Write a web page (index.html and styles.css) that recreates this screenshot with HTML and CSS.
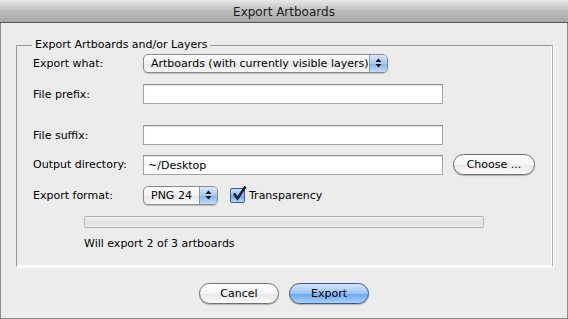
FILE: index.html
```html
<!DOCTYPE html>
<html lang="en">
<head>
  <meta charset="UTF-8" />
  <title>Export Artboards</title>
  <link rel="stylesheet" href="styles.css">
</head>
<body>
  <div class="window">
    <div class="titlebar">Export Artboards</div>
    <div class="content">
      <fieldset class="group">
        <legend>Export Artboards and/or Layers</legend>
        <div class="row row-what">
          <span class="label">Export what:</span>
          <div class="popup popup-wide">
            <span class="popup-text">Artboards (with currently visible layers)</span>
            <span class="popup-arrows">
              <svg width="7" height="10" viewBox="0 0 7 10"><path d="M3.5 0.5 L6.5 4 L0.5 4 Z M0.5 6 L6.5 6 L3.5 9.5 Z" fill="#111"/></svg>
            </span>
          </div>
        </div>
        <div class="row row-prefix">
          <span class="label">File prefix:</span>
          <div class="field"></div>
        </div>
        <div class="row row-suffix">
          <span class="label">File suffix:</span>
          <div class="field"></div>
        </div>
        <div class="row row-dir">
          <span class="label">Output directory:</span>
          <div class="field">~/Desktop</div>
          <button class="btn btn-choose" type="button">Choose ...</button>
        </div>
        <div class="row row-format">
          <span class="label">Export format:</span>
          <div class="popup popup-small">
            <span class="popup-text">PNG 24</span>
            <span class="popup-arrows">
              <svg width="7" height="10" viewBox="0 0 7 10"><path d="M3.5 0.5 L6.5 4 L0.5 4 Z M0.5 6 L6.5 6 L3.5 9.5 Z" fill="#111"/></svg>
            </span>
          </div>
          <label class="check">
            <span class="box">
              <svg width="16" height="16" viewBox="0 0 16 16"><path d="M3 7.5 L6.5 12.5 L14.5 0.5" fill="none" stroke="#0d1f3a" stroke-width="2.6"/></svg>
            </span>
            Transparency
          </label>
        </div>
        <div class="progress"></div>
        <div class="status">Will export 2 of 3 artboards</div>
      </fieldset>
      <div class="actions">
        <button class="btn" type="button">Cancel</button>
        <button class="btn btn-default" type="button">Export</button>
      </div>
    </div>
  </div>
</body>
</html>
```

FILE: styles.css
```css
body {
  margin: 0;
  font-family: "DejaVu Sans", sans-serif;
  font-size: 11px;
  color: #000;
  background: #ececec;
}
.window {
  width: 568px;
  height: 319px;
  box-sizing: border-box;
  border: 1px solid #8a8a8a;
  border-top: none;
  background: #ececec;
  display: flex;
  flex-direction: column;
}
.titlebar {
  height: 22px;
  line-height: 25px;
  text-align: center;
  font-size: 12px;
  color: #1a1a1a;
  background: linear-gradient(#e9e9e9, #bcbcbc 50%, #a7a7a7);
  border-bottom: 1px solid #555;
  margin: 0 -1px;
}
.content {
  flex: 1;
  padding: 15px 14px 0 15px;
  display: flex;
  flex-direction: column;
}
.group {
  margin: 0;
  padding: 0 0 0 16px;
  height: 229px;
  box-sizing: border-box;
  border: 1px solid #9a9a9a;
  border-right-color: #b0b0b0;
  border-bottom-color: #fafafa;
  box-shadow: inset -1px -1px 0 #fff, 1px 1px 0 #fff;
  display: flex;
  flex-direction: column;
}
.group legend {
  padding: 0 3px;
  margin-left: -1px;
  line-height: 14px;
}
.row {
  display: flex;
  align-items: center;
}
.label {
  width: 110px;
  flex: none;
}
.row-what { margin-top: 1px; height: 20px; }
.row-prefix { margin-top: 11px; height: 20px; }
.row-suffix { margin-top: 21px; height: 20px; }
.row-dir { margin-top: 9px; height: 21px; }
.row-format { margin-top: 10px; height: 20px; }
.field {
  width: 300px;
  height: 20px;
  box-sizing: border-box;
  background: #fff;
  border: 1px solid #a4a4a4;
  border-top-color: #8e8e8e;
  box-shadow: inset 0 1px 1px rgba(0,0,0,0.12);
  padding: 2px 4px;
  line-height: 15px;
}
.popup {
  height: 19px;
  box-sizing: border-box;
  border: 1px solid #8a8a8a;
  border-radius: 5px;
  background: linear-gradient(#ffffff, #f2f2f2 50%, #e6e6e6 51%, #f8f8f8);
  display: flex;
  align-items: center;
  box-shadow: 0 1px 1px rgba(0,0,0,0.2);
  overflow: hidden;
}
.popup-wide { width: 245px; }
.popup-small { width: 75px; }
.popup-text {
  flex: 1;
  padding-left: 7px;
  white-space: nowrap;
}
.popup-arrows {
  width: 17px;
  height: 100%;
  display: flex;
  align-items: center;
  justify-content: center;
  border-left: 1px solid #7d97c4;
  background: linear-gradient(#d9e7fb, #a9c8f2 50%, #86b2ec 51%, #c3dcfa);
}
.check {
  display: flex;
  align-items: center;
  margin-left: 12px;
}
.box {
  position: relative;
  width: 13px;
  height: 13px;
  border: 1px solid #3c5d8e;
  border-radius: 2px;
  background: linear-gradient(#cde0fa, #8ab6ee 50%, #6a9fe5 51%, #b6d5f9);
  margin-right: 4px;
}
.box svg {
  position: absolute;
  left: 0;
  top: -3px;
}
.btn {
  font-family: inherit;
  font-size: 11px;
  height: 21px;
  width: 80px;
  padding: 0;
  border: 1px solid #6f6f6f;
  border-radius: 11px;
  background: linear-gradient(#ffffff, #f4f4f4 50%, #e7e7e7 51%, #fafafa);
  box-shadow: 0 1px 1px rgba(0,0,0,0.25);
  color: #000;
}
.btn-choose {
  width: 82px;
  margin-left: 10px;
}
.btn-default {
  border-color: #3a5a8c;
  background: linear-gradient(#d4e6fc, #9cc3f4 50%, #6aa6ee 51%, #a6d0fb);
}
.progress {
  margin: 11px 0 0 51px;
  width: 400px;
  height: 12px;
  box-sizing: border-box;
  border: 1px solid #b4b4b4;
  border-radius: 2px;
  background: linear-gradient(#f4f4f4, #e2e2e2 50%, #ececec);
}
.status {
  margin: 9px 0 0 51px;
}
.actions {
  display: flex;
  justify-content: center;
  gap: 10px;
  margin-top: 16px;
  margin-left: -1px;
}
```
